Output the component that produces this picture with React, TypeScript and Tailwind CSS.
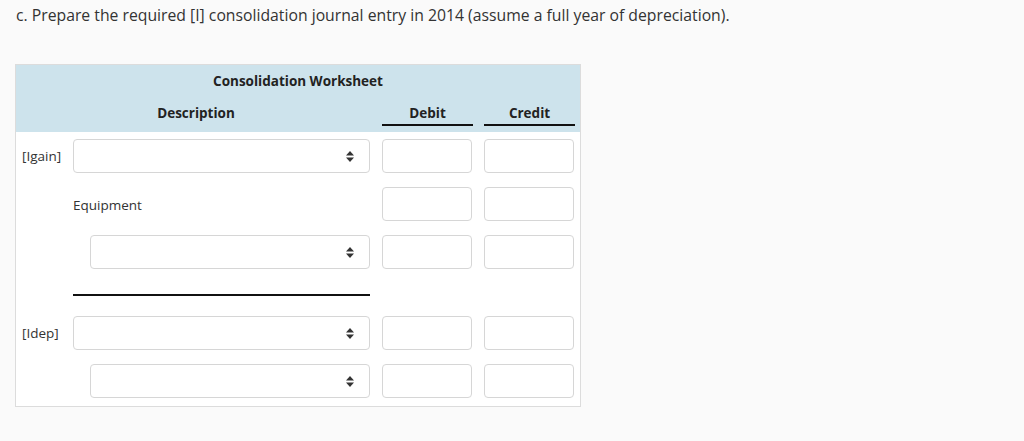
const font = { fontFamily: '"Open Sans", "Liberation Sans", sans-serif' }

function Arrows() {
  return (
    <svg width="8" height="11" viewBox="0 0 8 11" className="text-[#333]">
      <path d="M0 4.5 L4 0 L8 4.5 Z" fill="currentColor" />
      <path d="M0 6.5 L4 11 L8 6.5 Z" fill="currentColor" />
    </svg>
  )
}

function Select({ className = "" }: { className?: string }) {
  return (
    <div className={`h-[34px] rounded-[4px] border border-[#d6d6d6] bg-white flex items-center justify-end pr-[15px] ${className}`}>
      <Arrows />
    </div>
  )
}

function Amount() {
  return <div className="h-[34px] w-[90px] rounded-[4px] border border-[#d6d6d6] bg-white" />
}

function Amounts() {
  return (
    <>
      <div className="ml-[12px]"><Amount /></div>
      <div className="ml-[12px]"><Amount /></div>
    </>
  )
}

export default function App() {
  return (
    <div className="w-[1024px] h-[441px] bg-[#fafafa] text-[#333]" style={font}>
      <div className="pt-[4px] pl-[16px] text-[15.75px] leading-[22px] text-[#333]">
        c. Prepare the required [I] consolidation journal entry in 2014 (assume a full year of depreciation).
      </div>

      <div className="mt-[38px] ml-[15px] w-[566px] border border-[#dcdcdc] bg-white">
        <div className="h-[67px] bg-[#cde3ec] pt-[7px]">
          <div className="text-center text-[13.5px] font-bold leading-[18px] text-[#222]">Consolidation Worksheet</div>
          <div className="flex mt-[14px] text-[13.5px] font-bold leading-[18px] text-[#222]">
            <div className="w-[360px] text-center">Description</div>
            <div className="ml-[6px] w-[91px] text-center border-b-[2px] border-[#111] pb-[2px]">Debit</div>
            <div className="ml-[11px] w-[91px] text-center border-b-[2px] border-[#111] pb-[2px]">Credit</div>
          </div>
        </div>

        <div className="flex flex-col gap-[14px] pt-[7px] pb-[8px] text-[13.5px]">
          <div className="flex items-center">
            <div className="w-[57px] pl-[6px]">[Igain]</div>
            <Select className="w-[297px]" />
            <Amounts />
          </div>

          <div className="flex items-center">
            <div className="w-[57px]" />
            <div className="w-[297px] leading-[18px] pt-[2px]">Equipment</div>
            <Amounts />
          </div>

          <div className="flex items-center">
            <div className="w-[74px]" />
            <Select className="w-[280px]" />
            <Amounts />
          </div>

          <div className="flex pt-[11px] pb-[6px]">
            <div className="ml-[57px] w-[297px] h-[2px] bg-[#111]" />
          </div>

          <div className="flex items-center">
            <div className="w-[57px] pl-[6px]">[Idep]</div>
            <Select className="w-[297px]" />
            <Amounts />
          </div>

          <div className="flex items-center">
            <div className="w-[74px]" />
            <Select className="w-[280px]" />
            <Amounts />
          </div>
        </div>
      </div>
    </div>
  )
}
